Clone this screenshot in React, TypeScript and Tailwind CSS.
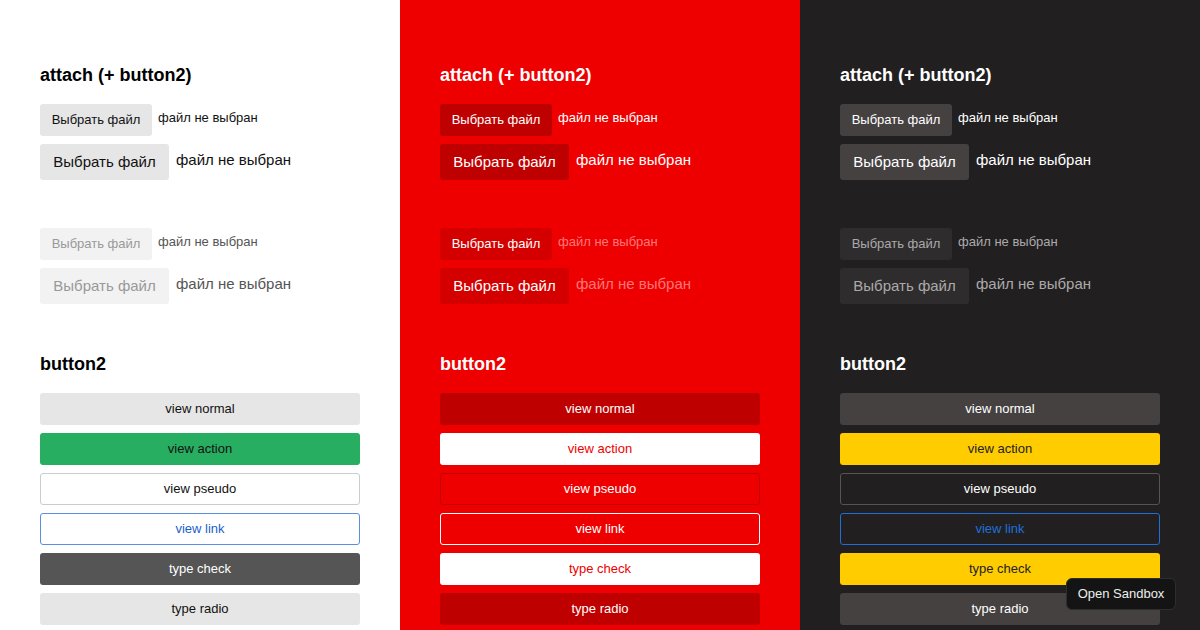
import React from 'react'

type Theme = {
  bg: string
  heading: string
  attach: string
  attachLabel: string
  attachOff: string
  attachOffLabel: string
  buttons: { label: string; cls: string }[]
}

const themes: Theme[] = [
  {
    bg: 'bg-white',
    heading: 'text-black',
    attach: 'bg-[#e6e6e6] text-[#111]',
    attachLabel: 'text-[#111]',
    attachOff: 'bg-[#f2f2f2] text-[#999]',
    attachOffLabel: 'text-[#555]',
    buttons: [
      { label: 'view normal', cls: 'bg-[#e6e6e6] text-[#111] border-transparent' },
      { label: 'view action', cls: 'bg-[#28ae61] text-[#111] border-transparent' },
      { label: 'view pseudo', cls: 'bg-white text-[#111] border-[#ccc]' },
      { label: 'view link', cls: 'bg-white text-[#1a5fc9] border-[#5a8ee0]' },
      { label: 'type check', cls: 'bg-[#555] text-white border-transparent' },
      { label: 'type radio', cls: 'bg-[#e6e6e6] text-[#111] border-transparent' },
    ],
  },
  {
    bg: 'bg-[#ee0000]',
    heading: 'text-white',
    attach: 'bg-[#bf0000] text-white',
    attachLabel: 'text-white',
    attachOff: 'bg-[#d40000] text-white',
    attachOffLabel: 'text-[#f77]',
    buttons: [
      { label: 'view normal', cls: 'bg-[#bf0000] text-white border-transparent' },
      { label: 'view action', cls: 'bg-white text-[#ee0000] border-transparent' },
      { label: 'view pseudo', cls: 'bg-[#ee0000] text-white border-[#c00000]' },
      { label: 'view link', cls: 'bg-[#ee0000] text-white border-white' },
      { label: 'type check', cls: 'bg-white text-[#ee0000] border-transparent' },
      { label: 'type radio', cls: 'bg-[#bf0000] text-white border-transparent' },
    ],
  },
  {
    bg: 'bg-[#221f20]',
    heading: 'text-white',
    attach: 'bg-[#454141] text-white',
    attachLabel: 'text-white',
    attachOff: 'bg-[#2f2c2d] text-[#aaa]',
    attachOffLabel: 'text-[#aaa]',
    buttons: [
      { label: 'view normal', cls: 'bg-[#454141] text-white border-transparent' },
      { label: 'view action', cls: 'bg-[#ffcc00] text-[#222] border-transparent' },
      { label: 'view pseudo', cls: 'bg-[#221f20] text-white border-[#555]' },
      { label: 'view link', cls: 'bg-[#221f20] text-[#1f6fd6] border-[#1f6fd6]' },
      { label: 'type check', cls: 'bg-[#ffcc00] text-[#222] border-transparent' },
      { label: 'type radio', cls: 'bg-[#454141] text-white border-transparent' },
    ],
  },
]

function AttachGroup({ theme, disabled }: { theme: Theme; disabled?: boolean }) {
  const btn = disabled ? theme.attachOff : theme.attach
  const lbl = disabled ? theme.attachOffLabel : theme.attachLabel
  return (
    <div className="flex flex-col gap-2">
      <div className="flex items-center gap-[6px]">
        <span className={`flex h-8 w-[112px] items-center justify-center rounded-[3px] text-[13px] ${btn}`}>
          Выбрать файл
        </span>
        <span className={`pb-[4px] text-[13px] ${lbl}`}>файл не выбран</span>
      </div>
      <div className="flex items-center gap-[7px]">
        <span className={`flex h-9 w-[129px] items-center justify-center rounded-[3px] text-[15px] ${btn}`}>
          Выбрать файл
        </span>
        <span className={`pb-[4px] text-[15px] ${lbl}`}>файл не выбран</span>
      </div>
    </div>
  )
}

function Column({ theme }: { theme: Theme }) {
  return (
    <div className={`${theme.bg} px-10 pt-[63px]`}>
      <h2 className={`text-[18px] leading-[24px] font-bold ${theme.heading}`}>attach (+ button2)</h2>
      <div className="mt-[17px]">
        <AttachGroup theme={theme} />
      </div>
      <div className="mt-12">
        <AttachGroup theme={theme} disabled />
      </div>
      <h2 className={`mt-[48px] text-[18px] leading-[24px] font-bold ${theme.heading}`}>button2</h2>
      <div className="mt-[17px] flex w-80 flex-col gap-2">
        {theme.buttons.map((b) => (
          <div
            key={b.label}
            className={`flex h-8 items-center justify-center rounded-[3px] border text-[13px] ${b.cls}`}
          >
            {b.label}
          </div>
        ))}
      </div>
    </div>
  )
}

export default function App() {
  return (
    <div className="relative grid h-[630px] w-[1200px] grid-cols-3 overflow-hidden font-['Liberation_Sans',Arial,sans-serif]">
      {themes.map((t, i) => (
        <Column key={i} theme={t} />
      ))}
      <div className="absolute right-6 bottom-5 flex h-8 w-[110px] items-center justify-center rounded-md border border-[#2e2e2e] bg-[#141414] text-[13px] text-[#eee]">
        Open Sandbox
      </div>
    </div>
  )
}
